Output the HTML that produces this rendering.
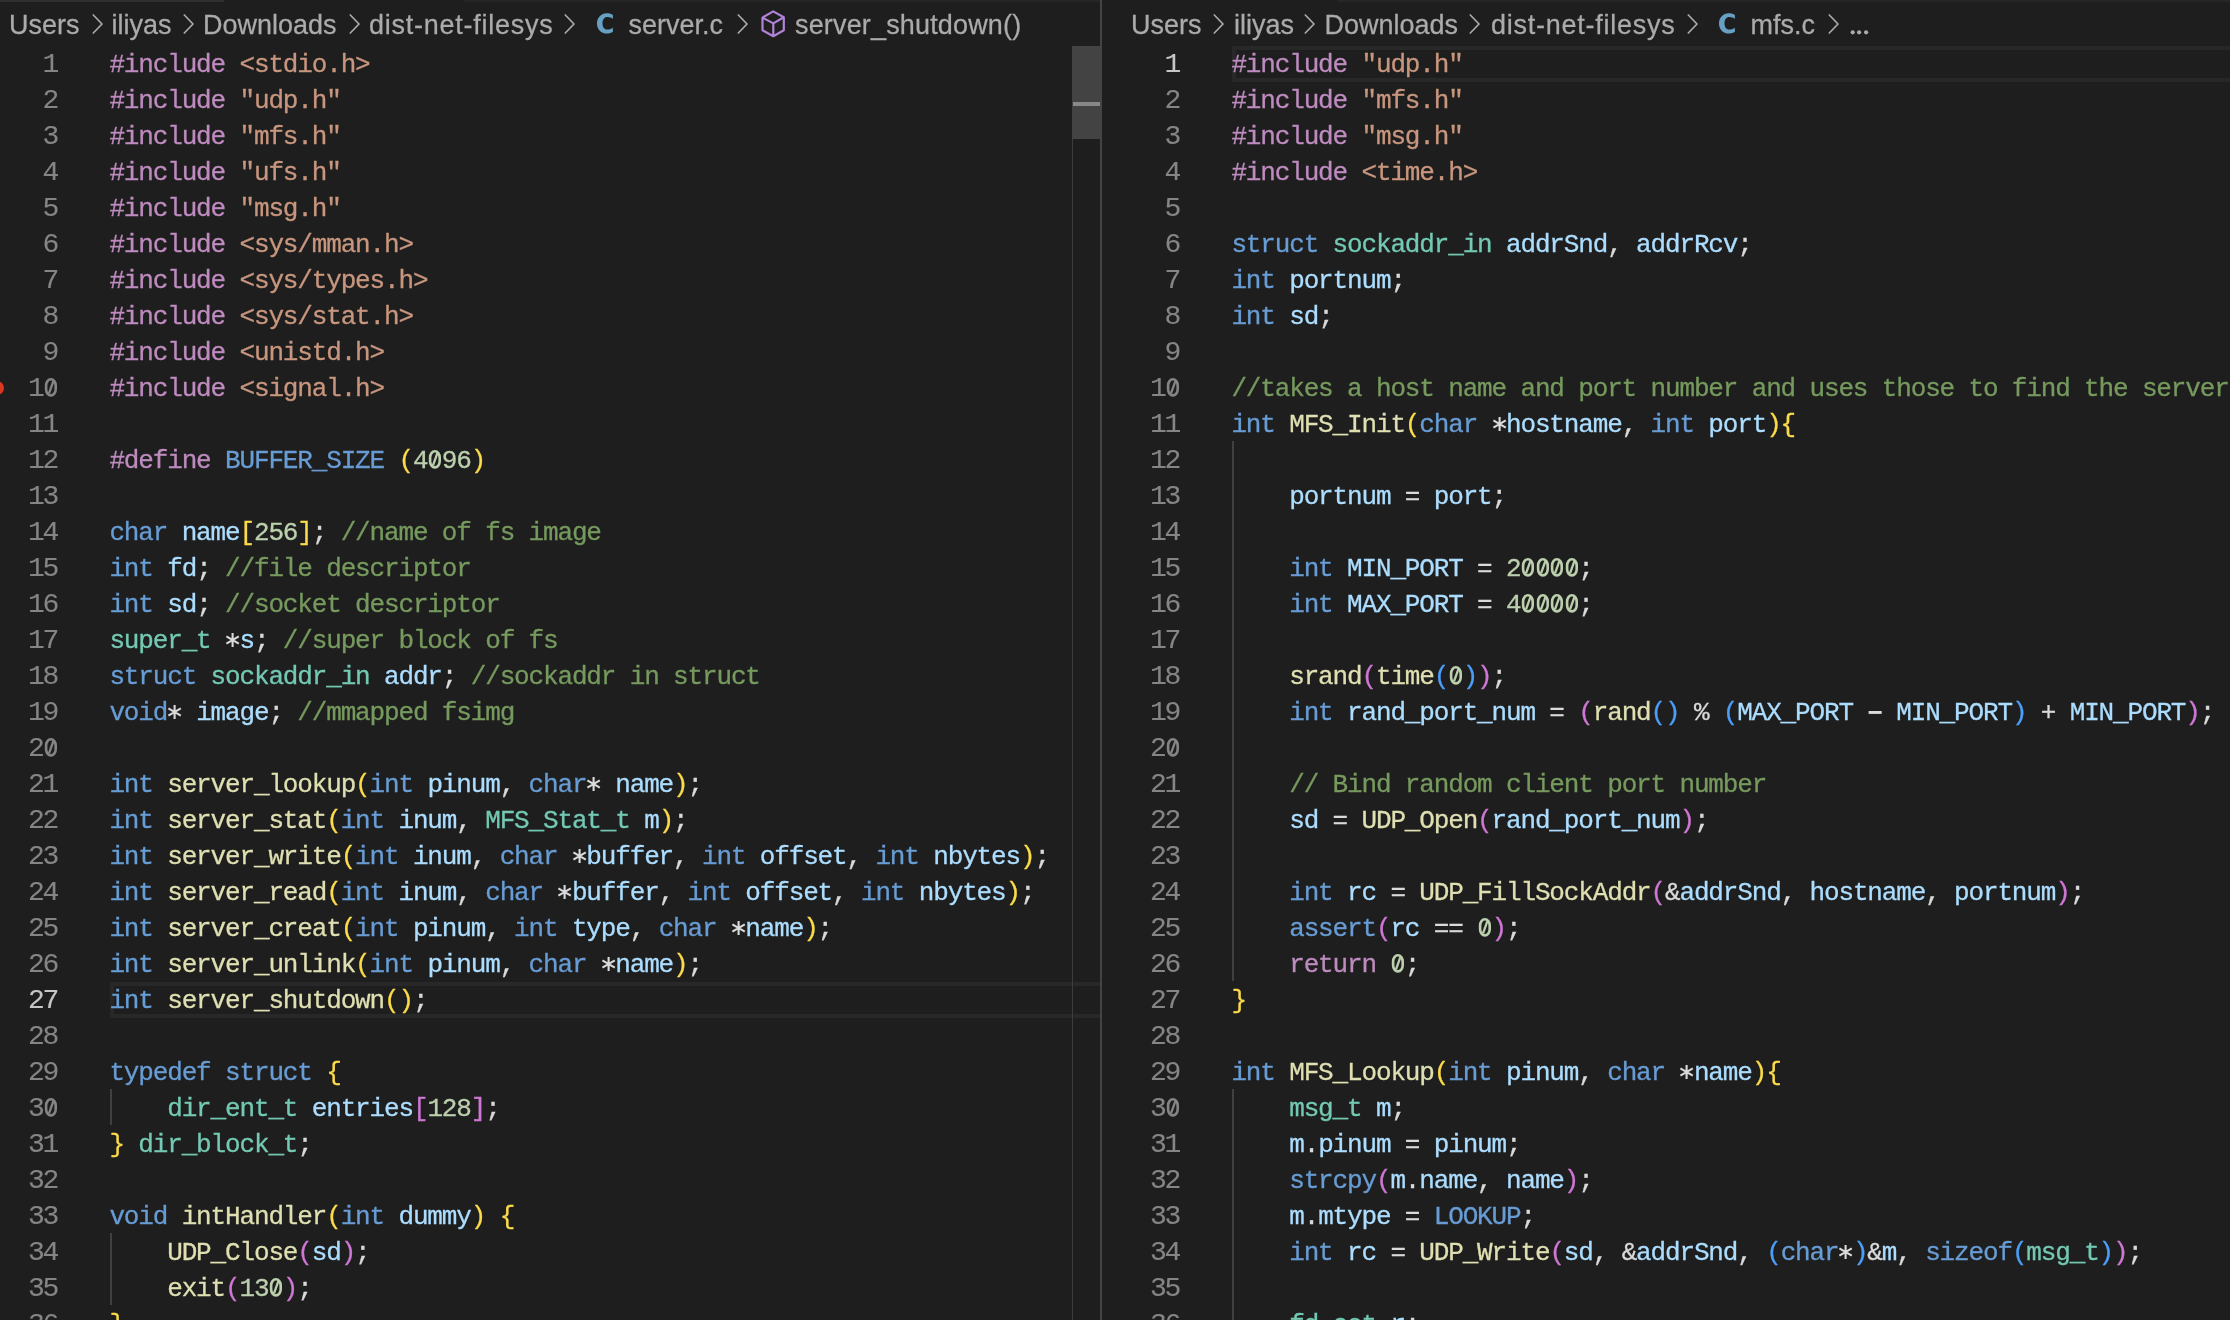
<!DOCTYPE html><html><head><meta charset="utf-8"><style>
*{margin:0;padding:0;box-sizing:border-box}
html,body{width:2230px;height:1320px;overflow:hidden;background:#1e1e1e}
body{position:relative;font-family:"Liberation Mono",monospace}
.wrap{position:absolute;left:0;top:0;width:2230px;height:1320px;will-change:transform;transform:translateZ(0)}
.ln{position:absolute;width:57px;text-align:right;height:36px;line-height:36px;font-size:28px;color:#858585;padding-top:1.5px;letter-spacing:-2.35px;-webkit-text-stroke:0.1px}
.ln.act{color:#c6c6c6}
.cl{position:absolute;white-space:pre;height:36px;line-height:36px;font-size:26px;color:#dadada;padding-top:2px;letter-spacing:-1.15px;margin-left:-0.6px;-webkit-text-stroke:0.3px}
i{font-style:normal}
.k{color:#689cd4}.p{color:#be8bbf}.s{color:#c8967e}.n{color:#bcd0ae}.f{color:#dfdfb2}.v{color:#acddfe}.t{color:#73c9b3}.c{color:#769a5e}
.y{color:#fcdb4a}.o{color:#cf77d4}.u{color:#4b9ffb}
.ast,.zr,.hy{position:relative;-webkit-text-fill-color:transparent;-webkit-text-stroke:0}
.ast svg,.zr svg,.hy svg{position:absolute;left:0;overflow:visible}
.hy svg{top:13.1px}
.ast svg{top:6px}
.cl .zr svg{top:3.2px}
.ln .zr svg{top:4.6px;left:0.6px}
.guide{position:absolute;width:2px;background:#404040}
.bc{position:absolute;top:0;height:46px;font-family:"Liberation Sans",sans-serif;font-size:27px;color:#ababab;white-space:pre}
.bc span{position:absolute;top:7px;line-height:36px;transform:scaleY(1.035);transform-origin:0 27.5px;-webkit-text-stroke:0.25px}
.strip{position:absolute;top:0;height:2px}
.curline{position:absolute;height:36px;border:4px solid #282828;border-right:none}
</style></head><body><div class=wrap>
<div class=strip style="left:0;width:224px;background:#2f2f2f"></div>
<div class=strip style="left:464px;width:636px;background:#262626"></div>
<div class=strip style="left:1338px;width:892px;background:#262626"></div>
<div class=bc style="left:0;width:100%"><span style="left:9px">Users</span><svg style="position:absolute;left:91.5px;top:13px" width="14" height="22" viewBox="0 0 14 22"><path d="M1.3 2 L10 11 L1.3 20" fill="none" stroke="#ababab" stroke-width="1.7" stroke-linecap="round" stroke-linejoin="round"/></svg><span style="left:111.5px">iliyas</span><svg style="position:absolute;left:183px;top:13px" width="14" height="22" viewBox="0 0 14 22"><path d="M1.3 2 L10 11 L1.3 20" fill="none" stroke="#ababab" stroke-width="1.7" stroke-linecap="round" stroke-linejoin="round"/></svg><span style="left:203px">Downloads</span><svg style="position:absolute;left:349px;top:13px" width="14" height="22" viewBox="0 0 14 22"><path d="M1.3 2 L10 11 L1.3 20" fill="none" stroke="#ababab" stroke-width="1.7" stroke-linecap="round" stroke-linejoin="round"/></svg><span style="left:369px;letter-spacing:0.75px">dist-net-filesys</span><svg style="position:absolute;left:563.5px;top:13px" width="14" height="22" viewBox="0 0 14 22"><path d="M1.3 2 L10 11 L1.3 20" fill="none" stroke="#ababab" stroke-width="1.7" stroke-linecap="round" stroke-linejoin="round"/></svg><svg style="position:absolute;left:595.5px;top:10px" width="20" height="26" viewBox="0 0 20 26"><path d="M 16.9 5.0 C 15.5 3.8 13.2 3.2 10.7 3.2 C 5.1 3.2 1.0 7.5 1.0 13.4 C 1.0 19.3 5.1 23.5 10.7 23.5 C 13.2 23.5 15.5 22.9 16.9 21.7 L 16.9 17.4 C 15.6 18.7 13.5 19.5 11.2 19.5 C 8.4 19.5 6.5 17.0 6.5 13.4 C 6.5 9.8 8.4 7.1 11.2 7.1 C 13.5 7.1 15.6 7.8 16.9 9.0 Z" fill="#67a0c2"/></svg><span style="left:628.5px">server.c</span><svg style="position:absolute;left:736.5px;top:13px" width="14" height="22" viewBox="0 0 14 22"><path d="M1.3 2 L10 11 L1.3 20" fill="none" stroke="#ababab" stroke-width="1.7" stroke-linecap="round" stroke-linejoin="round"/></svg><svg style="position:absolute;left:760.5px;top:10px" width="26" height="30" viewBox="0 0 26 30"><path d="M12.2 1.4 L22.8 7.3 L22.8 20.3 L12.3 26.2 L1.5 20.3 L1.5 7.6 Z M1.5 7.6 L12.3 13.4 L22.8 7.3 M12.3 13.4 L12.3 26.2" fill="none" stroke="#b083d8" stroke-width="2.2" stroke-linejoin="round"/></svg><span style="left:795px;letter-spacing:0.16px">server_shutdown()</span></div>
<div style="position:absolute;left:1122px;top:0;width:1108px;height:46px"><div class=bc style="left:0;width:100%"><span style="left:9px">Users</span><svg style="position:absolute;left:90.5px;top:13px" width="14" height="22" viewBox="0 0 14 22"><path d="M1.3 2 L10 11 L1.3 20" fill="none" stroke="#ababab" stroke-width="1.7" stroke-linecap="round" stroke-linejoin="round"/></svg><span style="left:112px">iliyas</span><svg style="position:absolute;left:182px;top:13px" width="14" height="22" viewBox="0 0 14 22"><path d="M1.3 2 L10 11 L1.3 20" fill="none" stroke="#ababab" stroke-width="1.7" stroke-linecap="round" stroke-linejoin="round"/></svg><span style="left:202.5px">Downloads</span><svg style="position:absolute;left:347px;top:13px" width="14" height="22" viewBox="0 0 14 22"><path d="M1.3 2 L10 11 L1.3 20" fill="none" stroke="#ababab" stroke-width="1.7" stroke-linecap="round" stroke-linejoin="round"/></svg><span style="left:369px;letter-spacing:0.75px">dist-net-filesys</span><svg style="position:absolute;left:565px;top:13px" width="14" height="22" viewBox="0 0 14 22"><path d="M1.3 2 L10 11 L1.3 20" fill="none" stroke="#ababab" stroke-width="1.7" stroke-linecap="round" stroke-linejoin="round"/></svg><svg style="position:absolute;left:595.5px;top:10px" width="20" height="26" viewBox="0 0 20 26"><path d="M 16.9 5.0 C 15.5 3.8 13.2 3.2 10.7 3.2 C 5.1 3.2 1.0 7.5 1.0 13.4 C 1.0 19.3 5.1 23.5 10.7 23.5 C 13.2 23.5 15.5 22.9 16.9 21.7 L 16.9 17.4 C 15.6 18.7 13.5 19.5 11.2 19.5 C 8.4 19.5 6.5 17.0 6.5 13.4 C 6.5 9.8 8.4 7.1 11.2 7.1 C 13.5 7.1 15.6 7.8 16.9 9.0 Z" fill="#67a0c2"/></svg><span style="left:628.5px">mfs.c</span><svg style="position:absolute;left:705.5px;top:13px" width="14" height="22" viewBox="0 0 14 22"><path d="M1.3 2 L10 11 L1.3 20" fill="none" stroke="#ababab" stroke-width="1.7" stroke-linecap="round" stroke-linejoin="round"/></svg><svg style="position:absolute;left:728px;top:26px" width="20" height="12" viewBox="0 0 20 12"><circle cx="2.7" cy="6.3" r="2.1" fill="#ababab"/><circle cx="9.1" cy="6.3" r="2.1" fill="#ababab"/><circle cx="16.1" cy="6.3" r="2.1" fill="#ababab"/></svg></div></div>
<div class=curline style="left:110px;top:982px;width:990px"></div>
<div class=curline style="left:1232px;top:46px;width:998px"></div>
<div class="ln" style="top:45px;left:0px">1</div>
<div class=cl style="top:45px;left:110px"><i class=p>#include</i> <i class=s>&lt;stdio.h&gt;</i></div>
<div class="ln" style="top:81px;left:0px">2</div>
<div class=cl style="top:81px;left:110px"><i class=p>#include</i> <i class=s>&quot;udp.h&quot;</i></div>
<div class="ln" style="top:117px;left:0px">3</div>
<div class=cl style="top:117px;left:110px"><i class=p>#include</i> <i class=s>&quot;mfs.h&quot;</i></div>
<div class="ln" style="top:153px;left:0px">4</div>
<div class=cl style="top:153px;left:110px"><i class=p>#include</i> <i class=s>&quot;ufs.h&quot;</i></div>
<div class="ln" style="top:189px;left:0px">5</div>
<div class=cl style="top:189px;left:110px"><i class=p>#include</i> <i class=s>&quot;msg.h&quot;</i></div>
<div class="ln" style="top:225px;left:0px">6</div>
<div class=cl style="top:225px;left:110px"><i class=p>#include</i> <i class=s>&lt;sys/mman.h&gt;</i></div>
<div class="ln" style="top:261px;left:0px">7</div>
<div class=cl style="top:261px;left:110px"><i class=p>#include</i> <i class=s>&lt;sys/types.h&gt;</i></div>
<div class="ln" style="top:297px;left:0px">8</div>
<div class=cl style="top:297px;left:110px"><i class=p>#include</i> <i class=s>&lt;sys/stat.h&gt;</i></div>
<div class="ln" style="top:333px;left:0px">9</div>
<div class=cl style="top:333px;left:110px"><i class=p>#include</i> <i class=s>&lt;unistd.h&gt;</i></div>
<div class="ln" style="top:369px;left:0px">1<i class=zr>0<svg width="16" height="21" viewBox="0 0 16 21"><rect x="3.1" y="2.3" width="9.6" height="16.1" rx="4.8" ry="6.2" stroke="currentColor" stroke-width="2.6" fill="none"/><path d="M6.0 16.3 L10.4 4.2" stroke="currentColor" stroke-width="2.3" fill="none"/></svg></i></div>
<div class=cl style="top:369px;left:110px"><i class=p>#include</i> <i class=s>&lt;signal.h&gt;</i></div>
<div class="ln" style="top:405px;left:0px">11</div>
<div class="ln" style="top:441px;left:0px">12</div>
<div class=cl style="top:441px;left:110px"><i class=p>#define</i> <i class=k>BUFFER_SIZE</i> <i class=y>(</i><i class=n>4<i class=zr>0<svg width="16" height="21" viewBox="0 0 16 21"><rect x="3.1" y="2.3" width="9.6" height="16.1" rx="4.8" ry="6.2" stroke="currentColor" stroke-width="2.6" fill="none"/><path d="M6.0 16.3 L10.4 4.2" stroke="currentColor" stroke-width="2.3" fill="none"/></svg></i>96</i><i class=y>)</i></div>
<div class="ln" style="top:477px;left:0px">13</div>
<div class="ln" style="top:513px;left:0px">14</div>
<div class=cl style="top:513px;left:110px"><i class=k>char</i> <i class=v>name</i><i class=y>[</i><i class=n>256</i><i class=y>]</i>; <i class=c>//name of fs image</i></div>
<div class="ln" style="top:549px;left:0px">15</div>
<div class=cl style="top:549px;left:110px"><i class=k>int</i> <i class=v>fd</i>; <i class=c>//file descriptor</i></div>
<div class="ln" style="top:585px;left:0px">16</div>
<div class=cl style="top:585px;left:110px"><i class=k>int</i> <i class=v>sd</i>; <i class=c>//socket descriptor</i></div>
<div class="ln" style="top:621px;left:0px">17</div>
<div class=cl style="top:621px;left:110px"><i class=t>super_t</i> <i class=ast>*<svg width="16" height="16" viewBox="0 0 16 16"><path d="M7.6 0.9 V15.1 M1.4 4.3 L13.8 11.7 M1.4 11.7 L13.8 4.3" stroke="currentColor" stroke-width="2.1" fill="none"/></svg></i><i class=v>s</i>; <i class=c>//super block of fs</i></div>
<div class="ln" style="top:657px;left:0px">18</div>
<div class=cl style="top:657px;left:110px"><i class=k>struct</i> <i class=t>sockaddr_in</i> <i class=v>addr</i>; <i class=c>//sockaddr in struct</i></div>
<div class="ln" style="top:693px;left:0px">19</div>
<div class=cl style="top:693px;left:110px"><i class=k>void</i><i class=ast>*<svg width="16" height="16" viewBox="0 0 16 16"><path d="M7.6 0.9 V15.1 M1.4 4.3 L13.8 11.7 M1.4 11.7 L13.8 4.3" stroke="currentColor" stroke-width="2.1" fill="none"/></svg></i> <i class=v>image</i>; <i class=c>//mmapped fsimg</i></div>
<div class="ln" style="top:729px;left:0px">2<i class=zr>0<svg width="16" height="21" viewBox="0 0 16 21"><rect x="3.1" y="2.3" width="9.6" height="16.1" rx="4.8" ry="6.2" stroke="currentColor" stroke-width="2.6" fill="none"/><path d="M6.0 16.3 L10.4 4.2" stroke="currentColor" stroke-width="2.3" fill="none"/></svg></i></div>
<div class="ln" style="top:765px;left:0px">21</div>
<div class=cl style="top:765px;left:110px"><i class=k>int</i> <i class=f>server_lookup</i><i class=y>(</i><i class=k>int</i> <i class=v>pinum</i>, <i class=k>char</i><i class=ast>*<svg width="16" height="16" viewBox="0 0 16 16"><path d="M7.6 0.9 V15.1 M1.4 4.3 L13.8 11.7 M1.4 11.7 L13.8 4.3" stroke="currentColor" stroke-width="2.1" fill="none"/></svg></i> <i class=v>name</i><i class=y>)</i>;</div>
<div class="ln" style="top:801px;left:0px">22</div>
<div class=cl style="top:801px;left:110px"><i class=k>int</i> <i class=f>server_stat</i><i class=y>(</i><i class=k>int</i> <i class=v>inum</i>, <i class=t>MFS_Stat_t</i> <i class=v>m</i><i class=y>)</i>;</div>
<div class="ln" style="top:837px;left:0px">23</div>
<div class=cl style="top:837px;left:110px"><i class=k>int</i> <i class=f>server_write</i><i class=y>(</i><i class=k>int</i> <i class=v>inum</i>, <i class=k>char</i> <i class=ast>*<svg width="16" height="16" viewBox="0 0 16 16"><path d="M7.6 0.9 V15.1 M1.4 4.3 L13.8 11.7 M1.4 11.7 L13.8 4.3" stroke="currentColor" stroke-width="2.1" fill="none"/></svg></i><i class=v>buffer</i>, <i class=k>int</i> <i class=v>offset</i>, <i class=k>int</i> <i class=v>nbytes</i><i class=y>)</i>;</div>
<div class="ln" style="top:873px;left:0px">24</div>
<div class=cl style="top:873px;left:110px"><i class=k>int</i> <i class=f>server_read</i><i class=y>(</i><i class=k>int</i> <i class=v>inum</i>, <i class=k>char</i> <i class=ast>*<svg width="16" height="16" viewBox="0 0 16 16"><path d="M7.6 0.9 V15.1 M1.4 4.3 L13.8 11.7 M1.4 11.7 L13.8 4.3" stroke="currentColor" stroke-width="2.1" fill="none"/></svg></i><i class=v>buffer</i>, <i class=k>int</i> <i class=v>offset</i>, <i class=k>int</i> <i class=v>nbytes</i><i class=y>)</i>;</div>
<div class="ln" style="top:909px;left:0px">25</div>
<div class=cl style="top:909px;left:110px"><i class=k>int</i> <i class=f>server_creat</i><i class=y>(</i><i class=k>int</i> <i class=v>pinum</i>, <i class=k>int</i> <i class=v>type</i>, <i class=k>char</i> <i class=ast>*<svg width="16" height="16" viewBox="0 0 16 16"><path d="M7.6 0.9 V15.1 M1.4 4.3 L13.8 11.7 M1.4 11.7 L13.8 4.3" stroke="currentColor" stroke-width="2.1" fill="none"/></svg></i><i class=v>name</i><i class=y>)</i>;</div>
<div class="ln" style="top:945px;left:0px">26</div>
<div class=cl style="top:945px;left:110px"><i class=k>int</i> <i class=f>server_unlink</i><i class=y>(</i><i class=k>int</i> <i class=v>pinum</i>, <i class=k>char</i> <i class=ast>*<svg width="16" height="16" viewBox="0 0 16 16"><path d="M7.6 0.9 V15.1 M1.4 4.3 L13.8 11.7 M1.4 11.7 L13.8 4.3" stroke="currentColor" stroke-width="2.1" fill="none"/></svg></i><i class=v>name</i><i class=y>)</i>;</div>
<div class="ln act" style="top:981px;left:0px">27</div>
<div class=cl style="top:981px;left:110px"><i class=k>int</i> <i class=f>server_shutdown</i><i class=y>()</i>;</div>
<div class="ln" style="top:1017px;left:0px">28</div>
<div class="ln" style="top:1053px;left:0px">29</div>
<div class=cl style="top:1053px;left:110px"><i class=k>typedef</i> <i class=k>struct</i> <i class=y>{</i></div>
<div class="ln" style="top:1089px;left:0px">3<i class=zr>0<svg width="16" height="21" viewBox="0 0 16 21"><rect x="3.1" y="2.3" width="9.6" height="16.1" rx="4.8" ry="6.2" stroke="currentColor" stroke-width="2.6" fill="none"/><path d="M6.0 16.3 L10.4 4.2" stroke="currentColor" stroke-width="2.3" fill="none"/></svg></i></div>
<div class=cl style="top:1089px;left:110px">    <i class=t>dir_ent_t</i> <i class=v>entries</i><i class=o>[</i><i class=n>128</i><i class=o>]</i>;</div>
<div class="ln" style="top:1125px;left:0px">31</div>
<div class=cl style="top:1125px;left:110px"><i class=y>}</i> <i class=t>dir_block_t</i>;</div>
<div class="ln" style="top:1161px;left:0px">32</div>
<div class="ln" style="top:1197px;left:0px">33</div>
<div class=cl style="top:1197px;left:110px"><i class=k>void</i> <i class=f>intHandler</i><i class=y>(</i><i class=k>int</i> <i class=v>dummy</i><i class=y>)</i> <i class=y>{</i></div>
<div class="ln" style="top:1233px;left:0px">34</div>
<div class=cl style="top:1233px;left:110px">    <i class=f>UDP_Close</i><i class=o>(</i><i class=v>sd</i><i class=o>)</i>;</div>
<div class="ln" style="top:1269px;left:0px">35</div>
<div class=cl style="top:1269px;left:110px">    <i class=f>exit</i><i class=o>(</i><i class=n>13<i class=zr>0<svg width="16" height="21" viewBox="0 0 16 21"><rect x="3.1" y="2.3" width="9.6" height="16.1" rx="4.8" ry="6.2" stroke="currentColor" stroke-width="2.6" fill="none"/><path d="M6.0 16.3 L10.4 4.2" stroke="currentColor" stroke-width="2.3" fill="none"/></svg></i></i><i class=o>)</i>;</div>
<div class="ln" style="top:1305px;left:0px">36</div>
<div class=cl style="top:1305px;left:110px"><i class=y>}</i></div>
<div class=guide style="left:110px;top:1089px;height:36px"></div>
<div class=guide style="left:110px;top:1233px;height:72px"></div>
<div class="ln act" style="top:45px;left:1122px">1</div>
<div class=cl style="top:45px;left:1232px"><i class=p>#include</i> <i class=s>&quot;udp.h&quot;</i></div>
<div class="ln" style="top:81px;left:1122px">2</div>
<div class=cl style="top:81px;left:1232px"><i class=p>#include</i> <i class=s>&quot;mfs.h&quot;</i></div>
<div class="ln" style="top:117px;left:1122px">3</div>
<div class=cl style="top:117px;left:1232px"><i class=p>#include</i> <i class=s>&quot;msg.h&quot;</i></div>
<div class="ln" style="top:153px;left:1122px">4</div>
<div class=cl style="top:153px;left:1232px"><i class=p>#include</i> <i class=s>&lt;time.h&gt;</i></div>
<div class="ln" style="top:189px;left:1122px">5</div>
<div class="ln" style="top:225px;left:1122px">6</div>
<div class=cl style="top:225px;left:1232px"><i class=k>struct</i> <i class=t>sockaddr_in</i> <i class=v>addrSnd</i>, <i class=v>addrRcv</i>;</div>
<div class="ln" style="top:261px;left:1122px">7</div>
<div class=cl style="top:261px;left:1232px"><i class=k>int</i> <i class=v>portnum</i>;</div>
<div class="ln" style="top:297px;left:1122px">8</div>
<div class=cl style="top:297px;left:1232px"><i class=k>int</i> <i class=v>sd</i>;</div>
<div class="ln" style="top:333px;left:1122px">9</div>
<div class="ln" style="top:369px;left:1122px">1<i class=zr>0<svg width="16" height="21" viewBox="0 0 16 21"><rect x="3.1" y="2.3" width="9.6" height="16.1" rx="4.8" ry="6.2" stroke="currentColor" stroke-width="2.6" fill="none"/><path d="M6.0 16.3 L10.4 4.2" stroke="currentColor" stroke-width="2.3" fill="none"/></svg></i></div>
<div class=cl style="top:369px;left:1232px"><i class=c>//takes a host name and port number and uses those to find the server</i></div>
<div class="ln" style="top:405px;left:1122px">11</div>
<div class=cl style="top:405px;left:1232px"><i class=k>int</i> <i class=f>MFS_Init</i><i class=y>(</i><i class=k>char</i> <i class=ast>*<svg width="16" height="16" viewBox="0 0 16 16"><path d="M7.6 0.9 V15.1 M1.4 4.3 L13.8 11.7 M1.4 11.7 L13.8 4.3" stroke="currentColor" stroke-width="2.1" fill="none"/></svg></i><i class=v>hostname</i>, <i class=k>int</i> <i class=v>port</i><i class=y>){</i></div>
<div class="ln" style="top:441px;left:1122px">12</div>
<div class="ln" style="top:477px;left:1122px">13</div>
<div class=cl style="top:477px;left:1232px">    <i class=v>portnum</i> = <i class=v>port</i>;</div>
<div class="ln" style="top:513px;left:1122px">14</div>
<div class="ln" style="top:549px;left:1122px">15</div>
<div class=cl style="top:549px;left:1232px">    <i class=k>int</i> <i class=v>MIN_PORT</i> = <i class=n>2<i class=zr>0<svg width="16" height="21" viewBox="0 0 16 21"><rect x="3.1" y="2.3" width="9.6" height="16.1" rx="4.8" ry="6.2" stroke="currentColor" stroke-width="2.6" fill="none"/><path d="M6.0 16.3 L10.4 4.2" stroke="currentColor" stroke-width="2.3" fill="none"/></svg></i><i class=zr>0<svg width="16" height="21" viewBox="0 0 16 21"><rect x="3.1" y="2.3" width="9.6" height="16.1" rx="4.8" ry="6.2" stroke="currentColor" stroke-width="2.6" fill="none"/><path d="M6.0 16.3 L10.4 4.2" stroke="currentColor" stroke-width="2.3" fill="none"/></svg></i><i class=zr>0<svg width="16" height="21" viewBox="0 0 16 21"><rect x="3.1" y="2.3" width="9.6" height="16.1" rx="4.8" ry="6.2" stroke="currentColor" stroke-width="2.6" fill="none"/><path d="M6.0 16.3 L10.4 4.2" stroke="currentColor" stroke-width="2.3" fill="none"/></svg></i><i class=zr>0<svg width="16" height="21" viewBox="0 0 16 21"><rect x="3.1" y="2.3" width="9.6" height="16.1" rx="4.8" ry="6.2" stroke="currentColor" stroke-width="2.6" fill="none"/><path d="M6.0 16.3 L10.4 4.2" stroke="currentColor" stroke-width="2.3" fill="none"/></svg></i></i>;</div>
<div class="ln" style="top:585px;left:1122px">16</div>
<div class=cl style="top:585px;left:1232px">    <i class=k>int</i> <i class=v>MAX_PORT</i> = <i class=n>4<i class=zr>0<svg width="16" height="21" viewBox="0 0 16 21"><rect x="3.1" y="2.3" width="9.6" height="16.1" rx="4.8" ry="6.2" stroke="currentColor" stroke-width="2.6" fill="none"/><path d="M6.0 16.3 L10.4 4.2" stroke="currentColor" stroke-width="2.3" fill="none"/></svg></i><i class=zr>0<svg width="16" height="21" viewBox="0 0 16 21"><rect x="3.1" y="2.3" width="9.6" height="16.1" rx="4.8" ry="6.2" stroke="currentColor" stroke-width="2.6" fill="none"/><path d="M6.0 16.3 L10.4 4.2" stroke="currentColor" stroke-width="2.3" fill="none"/></svg></i><i class=zr>0<svg width="16" height="21" viewBox="0 0 16 21"><rect x="3.1" y="2.3" width="9.6" height="16.1" rx="4.8" ry="6.2" stroke="currentColor" stroke-width="2.6" fill="none"/><path d="M6.0 16.3 L10.4 4.2" stroke="currentColor" stroke-width="2.3" fill="none"/></svg></i><i class=zr>0<svg width="16" height="21" viewBox="0 0 16 21"><rect x="3.1" y="2.3" width="9.6" height="16.1" rx="4.8" ry="6.2" stroke="currentColor" stroke-width="2.6" fill="none"/><path d="M6.0 16.3 L10.4 4.2" stroke="currentColor" stroke-width="2.3" fill="none"/></svg></i></i>;</div>
<div class="ln" style="top:621px;left:1122px">17</div>
<div class="ln" style="top:657px;left:1122px">18</div>
<div class=cl style="top:657px;left:1232px">    <i class=f>srand</i><i class=o>(</i><i class=f>time</i><i class=u>(</i><i class=n><i class=zr>0<svg width="16" height="21" viewBox="0 0 16 21"><rect x="3.1" y="2.3" width="9.6" height="16.1" rx="4.8" ry="6.2" stroke="currentColor" stroke-width="2.6" fill="none"/><path d="M6.0 16.3 L10.4 4.2" stroke="currentColor" stroke-width="2.3" fill="none"/></svg></i></i><i class=u>)</i><i class=o>)</i>;</div>
<div class="ln" style="top:693px;left:1122px">19</div>
<div class=cl style="top:693px;left:1232px">    <i class=k>int</i> <i class=v>rand_port_num</i> = <i class=o>(</i><i class=f>rand</i><i class=u>()</i> % <i class=u>(</i><i class=v>MAX_PORT</i> <i class=hy>-<svg width="16" height="4" viewBox="0 0 16 4"><rect x="1.6" y="0" width="13.1" height="2.9" fill="currentColor"/></svg></i> <i class=v>MIN_PORT</i><i class=u>)</i> + <i class=v>MIN_PORT</i><i class=o>)</i>;</div>
<div class="ln" style="top:729px;left:1122px">2<i class=zr>0<svg width="16" height="21" viewBox="0 0 16 21"><rect x="3.1" y="2.3" width="9.6" height="16.1" rx="4.8" ry="6.2" stroke="currentColor" stroke-width="2.6" fill="none"/><path d="M6.0 16.3 L10.4 4.2" stroke="currentColor" stroke-width="2.3" fill="none"/></svg></i></div>
<div class="ln" style="top:765px;left:1122px">21</div>
<div class=cl style="top:765px;left:1232px">    <i class=c>// Bind random client port number</i></div>
<div class="ln" style="top:801px;left:1122px">22</div>
<div class=cl style="top:801px;left:1232px">    <i class=v>sd</i> = <i class=f>UDP_Open</i><i class=o>(</i><i class=v>rand_port_num</i><i class=o>)</i>;</div>
<div class="ln" style="top:837px;left:1122px">23</div>
<div class="ln" style="top:873px;left:1122px">24</div>
<div class=cl style="top:873px;left:1232px">    <i class=k>int</i> <i class=v>rc</i> = <i class=f>UDP_FillSockAddr</i><i class=o>(</i>&amp;<i class=v>addrSnd</i>, <i class=v>hostname</i>, <i class=v>portnum</i><i class=o>)</i>;</div>
<div class="ln" style="top:909px;left:1122px">25</div>
<div class=cl style="top:909px;left:1232px">    <i class=k>assert</i><i class=o>(</i><i class=v>rc</i> == <i class=n><i class=zr>0<svg width="16" height="21" viewBox="0 0 16 21"><rect x="3.1" y="2.3" width="9.6" height="16.1" rx="4.8" ry="6.2" stroke="currentColor" stroke-width="2.6" fill="none"/><path d="M6.0 16.3 L10.4 4.2" stroke="currentColor" stroke-width="2.3" fill="none"/></svg></i></i><i class=o>)</i>;</div>
<div class="ln" style="top:945px;left:1122px">26</div>
<div class=cl style="top:945px;left:1232px">    <i class=p>return</i> <i class=n><i class=zr>0<svg width="16" height="21" viewBox="0 0 16 21"><rect x="3.1" y="2.3" width="9.6" height="16.1" rx="4.8" ry="6.2" stroke="currentColor" stroke-width="2.6" fill="none"/><path d="M6.0 16.3 L10.4 4.2" stroke="currentColor" stroke-width="2.3" fill="none"/></svg></i></i>;</div>
<div class="ln" style="top:981px;left:1122px">27</div>
<div class=cl style="top:981px;left:1232px"><i class=y>}</i></div>
<div class="ln" style="top:1017px;left:1122px">28</div>
<div class="ln" style="top:1053px;left:1122px">29</div>
<div class=cl style="top:1053px;left:1232px"><i class=k>int</i> <i class=f>MFS_Lookup</i><i class=y>(</i><i class=k>int</i> <i class=v>pinum</i>, <i class=k>char</i> <i class=ast>*<svg width="16" height="16" viewBox="0 0 16 16"><path d="M7.6 0.9 V15.1 M1.4 4.3 L13.8 11.7 M1.4 11.7 L13.8 4.3" stroke="currentColor" stroke-width="2.1" fill="none"/></svg></i><i class=v>name</i><i class=y>){</i></div>
<div class="ln" style="top:1089px;left:1122px">3<i class=zr>0<svg width="16" height="21" viewBox="0 0 16 21"><rect x="3.1" y="2.3" width="9.6" height="16.1" rx="4.8" ry="6.2" stroke="currentColor" stroke-width="2.6" fill="none"/><path d="M6.0 16.3 L10.4 4.2" stroke="currentColor" stroke-width="2.3" fill="none"/></svg></i></div>
<div class=cl style="top:1089px;left:1232px">    <i class=t>msg_t</i> <i class=v>m</i>;</div>
<div class="ln" style="top:1125px;left:1122px">31</div>
<div class=cl style="top:1125px;left:1232px">    <i class=v>m</i>.<i class=v>pinum</i> = <i class=v>pinum</i>;</div>
<div class="ln" style="top:1161px;left:1122px">32</div>
<div class=cl style="top:1161px;left:1232px">    <i class=k>strcpy</i><i class=o>(</i><i class=v>m</i>.<i class=v>name</i>, <i class=v>name</i><i class=o>)</i>;</div>
<div class="ln" style="top:1197px;left:1122px">33</div>
<div class=cl style="top:1197px;left:1232px">    <i class=v>m</i>.<i class=v>mtype</i> = <i class=k>LOOKUP</i>;</div>
<div class="ln" style="top:1233px;left:1122px">34</div>
<div class=cl style="top:1233px;left:1232px">    <i class=k>int</i> <i class=v>rc</i> = <i class=f>UDP_Write</i><i class=o>(</i><i class=v>sd</i>, &amp;<i class=v>addrSnd</i>, <i class=u>(</i><i class=k>char</i><i class=ast>*<svg width="16" height="16" viewBox="0 0 16 16"><path d="M7.6 0.9 V15.1 M1.4 4.3 L13.8 11.7 M1.4 11.7 L13.8 4.3" stroke="currentColor" stroke-width="2.1" fill="none"/></svg></i><i class=u>)</i>&amp;<i class=v>m</i>, <i class=k>sizeof</i><i class=u>(</i><i class=t>msg_t</i><i class=u>)</i><i class=o>)</i>;</div>
<div class="ln" style="top:1269px;left:1122px">35</div>
<div class="ln" style="top:1305px;left:1122px">36</div>
<div class=cl style="top:1305px;left:1232px">    <i class=t>fd_set</i> <i class=v>r</i>;</div>
<div class=guide style="left:1232px;top:441px;height:540px"></div>
<div class=guide style="left:1232px;top:1089px;height:252px"></div>
<div style="position:absolute;left:1072px;top:46px;width:1px;height:1274px;background:#3c3c3c"></div>
<div style="position:absolute;left:1072px;top:46px;width:28px;height:93px;background:#434343"></div>
<div style="position:absolute;left:1073px;top:102px;width:27px;height:4px;background:#888888"></div>
<div style="position:absolute;left:1100px;top:0;width:2px;height:1320px;background:#444444"></div>
<div style="position:absolute;left:-10px;top:381px;width:14px;height:14px;border-radius:50%;background:#d9371f"></div>
</div></body></html>
